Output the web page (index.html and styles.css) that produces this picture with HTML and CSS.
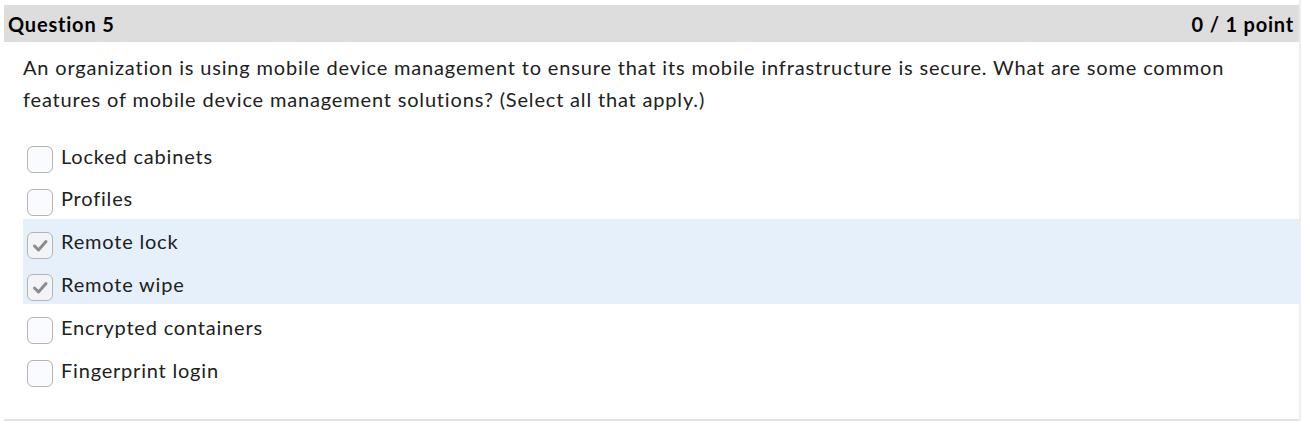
FILE: index.html
```html
<!DOCTYPE html>
<html>
<head>
<meta charset="utf-8">
<link rel="stylesheet" href="styles.css">
</head>
<body>
<div class="page">
  <div class="card">
    <div class="header">
      <span class="title">Question 5</span>
      <span class="score">0 / 1 point</span>
    </div>
    <div class="body">
      <p class="question">An organization is using mobile device management to ensure that its mobile infrastructure is secure. What are some common features of mobile device management solutions? (Select all that apply.)</p>
      <div class="options">
        <div class="opt"><span class="box"></span><span class="label">Locked cabinets</span></div>
        <div class="opt"><span class="box"></span><span class="label">Profiles</span></div>
        <div class="opt sel"><span class="box checked"><svg viewBox="0 0 26 26" width="26" height="26"><path d="M7.5 14 L11.5 18 L19 9.5" fill="none" stroke="#8c8c8c" stroke-width="3" stroke-linecap="round" stroke-linejoin="round"/></svg></span><span class="label">Remote lock</span></div>
        <div class="opt sel"><span class="box checked"><svg viewBox="0 0 26 26" width="26" height="26"><path d="M7.5 14 L11.5 18 L19 9.5" fill="none" stroke="#8c8c8c" stroke-width="3" stroke-linecap="round" stroke-linejoin="round"/></svg></span><span class="label">Remote wipe</span></div>
        <div class="opt"><span class="box"></span><span class="label">Encrypted containers</span></div>
        <div class="opt"><span class="box"></span><span class="label">Fingerprint login</span></div>
      </div>
    </div>
  </div>
  <div class="strip"></div>
</div>
</body>
</html>
```

FILE: styles.css
```css
html, body {
  margin: 0;
  padding: 0;
  background: #ffffff;
}
body {
  font-family: Lato, "Open Sans", sans-serif;
  color: #202122;
  letter-spacing: 0.8px;
}
.page {
  display: flex;
  padding: 5px 0 0 4px;
  height: 416px;
  box-sizing: content-box;
}
.card {
  width: 1295px;
  height: 414px;
  border-bottom: 2px solid #e3e3e3;
  display: flex;
  flex-direction: column;
}
.strip {
  width: 2px;
  margin-top: -5px;
  height: 421px;
  background: #eeeeee;
}
.header {
  height: 37px;
  background: #dddddd;
  display: flex;
  align-items: center;
  justify-content: space-between;
  padding: 0 5px 0 4px;
  font-weight: 700;
  font-size: 20px;
  color: #000;
}
.body {
  padding: 0 0 0 19px;
}
.question {
  margin: 9px 50px 0 0;
  font-size: 20px;
  line-height: 32px;
  letter-spacing: 0.83px;
}
.options {
  margin-top: 18px;
}
.opt {
  height: 42.8px;
  display: flex;
  align-items: flex-start;
  padding-left: 4px;
}
.opt.sel {
  background: #e6f0fa;
}
.box {
  width: 24px;
  height: 25px;
  margin-top: 13px;
  border: 1px solid #b4b4b4;
  border-radius: 6px;
  background: #f9fbff;
  flex: none;
  position: relative;
}
.box.checked {
  background: #f2f4f6;
}
.box svg {
  position: absolute;
  left: -1px;
  top: -1px;
}
.label {
  margin-left: 8px;
  margin-top: 9.6px;
  font-size: 20px;
  line-height: 26px;
}
```
